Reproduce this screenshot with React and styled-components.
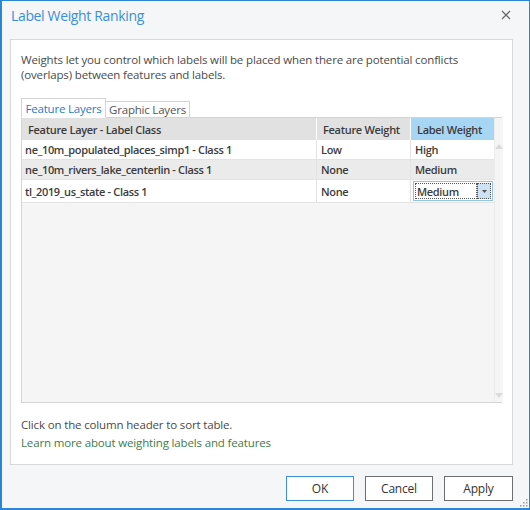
import React from "react";
import styled, { createGlobalStyle } from "styled-components";

const Global = createGlobalStyle`
  html, body { margin: 0; padding: 0; }
  body {
    font-family: "Open Sans", "Noto Sans", sans-serif;
    background: #ffffff;
  }
`;

const Window = styled.div`
  box-sizing: border-box;
  width: 530px;
  height: 510px;
  border: 1px solid #2b87d6;
  border-left-width: 2px;
  border-bottom-width: 2px;
  background: #f5f6f7;
  display: flex;
  flex-direction: column;
  position: relative;
`;

const TitleBar = styled.div`
  height: 28px;
  display: flex;
  align-items: center;
  justify-content: space-between;
  padding: 0 18px 0 9px;
`;

const Title = styled.div`
  font-size: 14px;
  color: #3a8fd8;
  letter-spacing: -0.35px;
`;

const Close = styled.svg`
  width: 10px;
  height: 10px;
`;

const Panel = styled.div`
  margin: 10px 16px 0 8px;
  height: 426px;
  box-sizing: border-box;
  background: #ffffff;
  border: 1px solid #d6d8da;
  padding: 12px 10px 0 10px;
  display: flex;
  flex-direction: column;
`;

const Intro = styled.p`
  margin: 0 0 16px;
  font-size: 11.5px;
  line-height: 15px;
  color: #4a4a4a;
  letter-spacing: -0.15px;
`;

const Tabs = styled.div`
  display: flex;
  align-items: flex-end;
  height: 20px;
  position: relative;
  z-index: 1;
  margin-bottom: -1px;
`;

const Tab = styled.div`
  box-sizing: border-box;
  height: ${p => (p.$active ? "20px" : "17px")};
  width: ${p => p.$w}px;
  border: 1px solid #d4d4d4;
  border-bottom: ${p => (p.$active ? "1px solid #ffffff" : "1px solid #d4d4d4")};
  ${p => (p.$active ? "" : "border-left: none;")}
  background: #ffffff;
  color: ${p => (p.$active ? "#1f7bcc" : "#555555")};
  font-size: 11.5px;
  letter-spacing: -0.2px;
  display: flex;
  align-items: center;
  justify-content: center;
`;

const Grid = styled.div`
  box-sizing: border-box;
  height: 286px;
  border: 1px solid #d4d4d4;
  background: #f5f5f5;
  display: flex;
`;

const Table = styled.div`
  flex: 1;
  display: grid;
  grid-template-columns: 294px 94px 84px;
  align-content: start;
`;

const Head = styled.div`
  box-sizing: border-box;
  height: 22px;
  background: ${p => (p.$sel ? "#a7d6f4" : "#e1e1e1")};
  border-left: ${p => (p.$first ? "none" : "1px solid #ffffff")};
  font-size: 11px;
  font-weight: 600;
  color: #3b3b3b;
  letter-spacing: -0.3px;
  display: flex;
  align-items: center;
  padding-left: 6px;
`;

const Cell = styled.div`
  box-sizing: border-box;
  height: ${p => (p.$tall ? "23px" : "20px")};
  background: ${p => (p.$alt ? "#ebebeb" : "#ffffff")};
  border-left: ${p => (p.$first ? "none" : "1px solid #e3e3e3")};
  border-bottom: 1px solid #e3e3e3;
  font-size: 11px;
  font-weight: 600;
  color: #3b3b3b;
  letter-spacing: -0.35px;
  display: flex;
  align-items: center;
  padding-left: ${p => (p.$first ? "3px" : "4px")};
  white-space: nowrap;
`;

const EditCell = styled(Cell)`
  padding: 1px 1px 1px 2px;
`;

const Combo = styled.div`
  flex: 1;
  height: 100%;
  box-sizing: border-box;
  border: 1px solid #8fc3ec;
  display: flex;
  background: #ffffff;
`;

const ComboText = styled.div`
  flex: 1;
  display: flex;
  align-items: center;
  padding-left: 2px;
  margin: 1px 0 1px 1px;
  outline: 1px dotted #555;
  outline-offset: -1px;
  font-weight: 600;
`;

const ComboButton = styled.div`
  width: 13px;
  background: #cde3f5;
  border-left: 1px solid #9cc7ea;
  display: flex;
  align-items: center;
  justify-content: center;
  margin: 1px 1px 1px 0;
  outline: 1px dotted #555;
  outline-offset: -1px;
`;

const ScrollBar = styled.div`
  width: 8px;
  display: flex;
  flex-direction: column;
  justify-content: space-between;
  align-items: center;
  padding: 26px 0 4px;
  border-left: 1px solid #ececec;
  background: #f5f5f5;
`;

const Arrow = styled.div`
  width: 0;
  height: 0;
  border-left: 4px solid transparent;
  border-right: 4px solid transparent;
  ${p =>
    p.$down
      ? "border-top: 5px solid #dadada;"
      : "border-bottom: 5px solid #dadada;"}
`;

const Hint = styled.div`
  margin-top: 13px;
  font-size: 11.5px;
  color: #4a4a4a;
  letter-spacing: -0.15px;
  line-height: 18px;
`;

const Link = styled.a`
  font-size: 11.5px;
  color: #3b7d4a;
  letter-spacing: -0.15px;
  line-height: 18px;
  text-decoration: none;
`;

const Footer = styled.div`
  display: flex;
  justify-content: flex-end;
  gap: 11px;
  padding: 11px 16px 0 0;
`;

const Button = styled.button`
  box-sizing: border-box;
  width: ${p => p.$w}px;
  height: 25px;
  background: #ffffff;
  border: 1px solid ${p => (p.$primary ? "#3c8fd8" : "#6e6e6e")};
  font-family: inherit;
  font-size: 12px;
  color: #333333;
  letter-spacing: -0.2px;
  padding: 0;
`;

const Grip = styled.svg`
  position: absolute;
  right: 1px;
  bottom: 1px;
  width: 8px;
  height: 8px;
`;

const rows = [
  ["ne_10m_populated_places_simp1 - Class 1", "Low", "High"],
  ["ne_10m_rivers_lake_centerlin - Class 1", "None", "Medium"],
];

export default function App() {
  return (
    <>
      <Global />
      <Window>
        <TitleBar>
          <Title>Label Weight Ranking</Title>
          <Close viewBox="0 0 10 10">
            <path d="M1 1 L9 9 M9 1 L1 9" stroke="#6a6a6a" strokeWidth="1.3" />
          </Close>
        </TitleBar>
        <Panel>
          <Intro>
            Weights let you control which labels will be placed when there are potential conflicts
            <br />
            (overlaps) between features and labels.
          </Intro>
          <Tabs>
            <Tab $active $w={85}>Feature Layers</Tab>
            <Tab $w={84}>Graphic Layers</Tab>
          </Tabs>
          <Grid>
            <Table>
              <Head $first>Feature Layer - Label Class</Head>
              <Head>Feature Weight</Head>
              <Head $sel>Label Weight</Head>
              {rows.map((r, i) => (
                <React.Fragment key={r[0]}>
                  <Cell $first $alt={i === 1}>{r[0]}</Cell>
                  <Cell $alt={i === 1}>{r[1]}</Cell>
                  <Cell $alt={i === 1}>{r[2]}</Cell>
                </React.Fragment>
              ))}
              <Cell $first $tall>tl_2019_us_state - Class 1</Cell>
              <Cell $tall>None</Cell>
              <EditCell $tall>
                <Combo>
                  <ComboText>Medium</ComboText>
                  <ComboButton>
                    <svg width="5" height="3" viewBox="0 0 5 3">
                      <path d="M0 0 H5 L2.5 3 Z" fill="#555" />
                    </svg>
                  </ComboButton>
                </Combo>
              </EditCell>
            </Table>
            <ScrollBar>
              <Arrow />
              <Arrow $down />
            </ScrollBar>
          </Grid>
          <Hint>Click on the column header to sort table.</Hint>
          <Link href="#">Learn more about weighting labels and features</Link>
        </Panel>
        <Footer>
          <Button $primary $w={68}>OK</Button>
          <Button $w={68}>Cancel</Button>
          <Button $w={69}>Apply</Button>
        </Footer>
        <Grip viewBox="0 0 8 8">
          {[[6, 0], [6, 3], [3, 3], [6, 6], [3, 6], [0, 6]].map(([x, y]) => (
            <rect key={`${x}-${y}`} x={x} y={y} width="1.5" height="1.5" fill="#9a9a9a" />
          ))}
        </Grip>
      </Window>
    </>
  );
}
